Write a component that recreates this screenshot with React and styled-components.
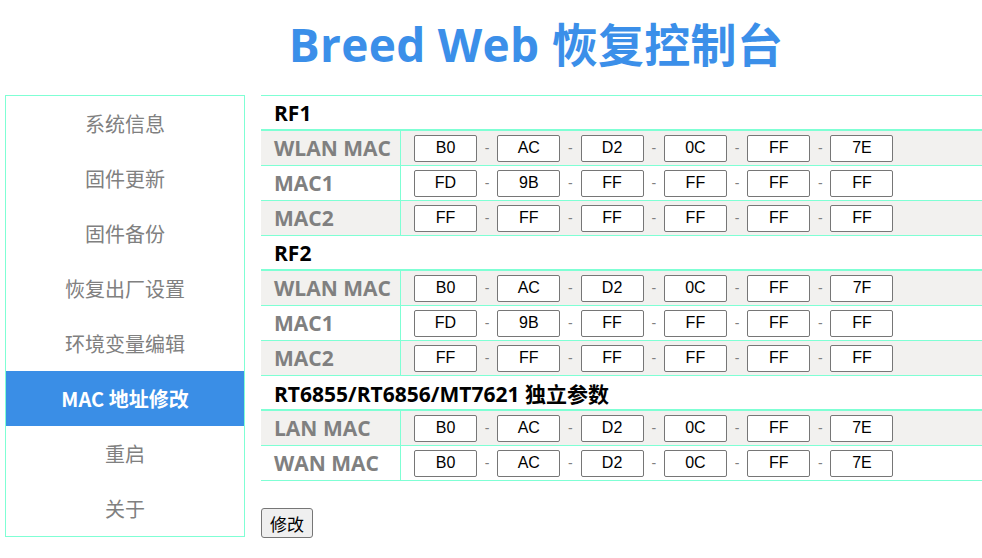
import React from 'react';
import styled, { createGlobalStyle } from 'styled-components';

const GlobalStyle = createGlobalStyle`
    html, body {
        margin: 0;
        padding: 0;
        background: #fff;
        overflow: hidden;
    }
    body {
        font-family: "Open Sans", "Noto Sans CJK SC", sans-serif;
    }
`;

const Page = styled.div`
    width: 982px;
    display: flex;
    flex-direction: column;
`;

const Title = styled.h1`
    margin: 0;
    height: 95px;
    line-height: 88px;
    padding-left: 90px;
    text-align: center;
    font-size: 46px;
    font-weight: bold;
    color: #3b8fe9;
    letter-spacing: 0.3px;
    font-family: "Open Sans", "Noto Sans CJK SC", sans-serif;
`;

const Body = styled.div`
    display: flex;
    align-items: flex-start;
    gap: 16px;
    padding-left: 5px;
`;

const Sidebar = styled.ul`
    list-style: none;
    margin: 0;
    padding: 0;
    width: 238px;
    border: 1px solid #7fffd4;
    flex-shrink: 0;
`;

const NavItem = styled.li`
    height: 55px;
    display: flex;
    align-items: center;
    justify-content: center;
    font-size: 20px;
    font-family: "Noto Sans CJK SC", sans-serif;
    color: ${props => props.active ? '#fff' : '#808080'};
    background: ${props => props.active ? '#3a8ee6' : 'transparent'};
    font-weight: ${props => props.active ? 'bold' : 'normal'};
`;

const Main = styled.div`
    flex: 1;
    display: flex;
    flex-direction: column;
`;

const Table = styled.div`
    border-top: 1px solid #7fffd4;
`;

const SectionTitle = styled.div`
    height: 33px;
    display: flex;
    align-items: center;
    padding-left: 13px;
    font-size: 21px;
    font-weight: bold;
    color: #000;
    border-bottom: 2px solid #7fffd4;
`;

const Row = styled.div`
    height: 34px;
    display: flex;
    background: ${props => props.shaded ? '#f2f1ef' : '#fff'};
    border-bottom: 1px solid #7fffd4;
`;

const Label = styled.div`
    width: 126px;
    padding-left: 13px;
    border-right: 1px solid #7fffd4;
    display: flex;
    align-items: center;
    font-size: 21px;
    font-weight: bold;
    color: #808080;
    white-space: nowrap;
`;

const Fields = styled.div`
    display: flex;
    align-items: center;
    padding-left: 13px;
`;

const ByteInput = styled.input`
    box-sizing: border-box;
    width: 63px;
    height: 27px;
    border: 1px solid #767676;
    border-radius: 2px;
    background: #fff;
    text-align: center;
    font-family: "Liberation Sans", Arial, sans-serif;
    font-size: 16px;
    color: #000;
    padding: 0;
`;

const Dash = styled.span`
    width: 20.3px;
    text-align: center;
    color: #808080;
    font-family: "Liberation Sans", Arial, sans-serif;
    font-size: 14px;
`;

const SubmitButton = styled.button`
    align-self: flex-start;
    margin-top: 27px;
    height: 30px;
    padding: 0 8px;
    border: 1px solid #767676;
    border-radius: 3px;
    background: #efefef;
    font-family: "Noto Sans CJK SC", sans-serif;
    font-size: 17px;
    color: #000;
`;

const navItems = ['系统信息', '固件更新', '固件备份', '恢复出厂设置', '环境变量编辑', 'MAC 地址修改', '重启', '关于'];

const sections = [
    {
        title: 'RF1',
        rows: [
            { label: 'WLAN MAC', mac: ['B0', 'AC', 'D2', '0C', 'FF', '7E'] },
            { label: 'MAC1', mac: ['FD', '9B', 'FF', 'FF', 'FF', 'FF'] },
            { label: 'MAC2', mac: ['FF', 'FF', 'FF', 'FF', 'FF', 'FF'] },
        ],
    },
    {
        title: 'RF2',
        rows: [
            { label: 'WLAN MAC', mac: ['B0', 'AC', 'D2', '0C', 'FF', '7F'] },
            { label: 'MAC1', mac: ['FD', '9B', 'FF', 'FF', 'FF', 'FF'] },
            { label: 'MAC2', mac: ['FF', 'FF', 'FF', 'FF', 'FF', 'FF'] },
        ],
    },
    {
        title: 'RT6855/RT6856/MT7621 独立参数',
        rows: [
            { label: 'LAN MAC', mac: ['B0', 'AC', 'D2', '0C', 'FF', '7E'] },
            { label: 'WAN MAC', mac: ['B0', 'AC', 'D2', '0C', 'FF', '7E'] },
        ],
    },
];

function MacRow({ label, mac, shaded }) {
    return (
        <Row shaded={shaded}>
            <Label>{label}</Label>
            <Fields>
                {mac.map((b, i) => (
                    <React.Fragment key={i}>
                        {i > 0 && <Dash>-</Dash>}
                        <ByteInput defaultValue={b} />
                    </React.Fragment>
                ))}
            </Fields>
        </Row>
    );
}

function App() {
    return (
        <Page>
            <GlobalStyle />
            <Title>Breed Web 恢复控制台</Title>
            <Body>
                <Sidebar>
                    {navItems.map(item => (
                        <NavItem key={item} active={item === 'MAC 地址修改'}>{item}</NavItem>
                    ))}
                </Sidebar>
                <Main>
                    <Table>
                        {sections.map(section => (
                            <React.Fragment key={section.title}>
                                <SectionTitle>{section.title}</SectionTitle>
                                {section.rows.map((row, i) => (
                                    <MacRow key={row.label} label={row.label} mac={row.mac} shaded={i % 2 === 0} />
                                ))}
                            </React.Fragment>
                        ))}
                    </Table>
                    <SubmitButton>修改</SubmitButton>
                </Main>
            </Body>
        </Page>
    );
}

export default App;
